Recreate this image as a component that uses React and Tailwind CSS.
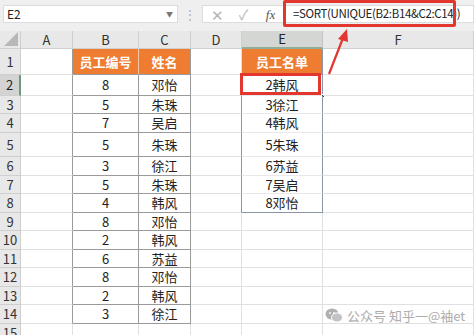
import React from 'react';

const FONT = { fontFamily: '"Noto Sans CJK SC", "Noto Sans", sans-serif' };

const ids = [8, 5, 7, 5, 3, 5, 4, 8, 2, 6, 8, 2, 3];
const names = ['邓怡', '朱珠', '吴启', '朱珠', '徐江', '朱珠', '韩风', '邓怡', '韩风', '苏益', '邓怡', '韩风', '徐江'];
const roster = ['2韩风', '3徐江', '4韩风', '5朱珠', '6苏益', '7吴启', '8邓怡'];
const cols = ['A', 'B', 'C', 'D', 'E', 'F'];

function Toolbar() {
  return (
    <div className="h-[31px] bg-[#efefef] flex items-start pt-[5px] pl-[3px]">
      <div className="w-[175px] h-[18px] bg-white border border-[#dcdcdc] flex items-center justify-between pl-[3px] pr-[4px]">
        <span className="text-[12px] text-[#222] leading-none">E2</span>
        <span className="text-[7px] text-[#777] leading-none">▼</span>
      </div>
      <div className="w-[24px] h-[18px] flex items-center justify-center text-[#b0b0b0] text-[12px]">⋮</div>
      <div className="flex-1 h-[18px] bg-white border border-[#dcdcdc] flex items-center">
        <span className="w-[26px] text-center text-[15px] text-[#b5b5b5] leading-none ml-[1px]">✕</span>
        <span className="w-[27px] text-center text-[14px] text-[#b5b5b5] leading-none">✓</span>
        <span className="w-[27px] text-center text-[13px] text-[#555] italic leading-none" style={{ fontFamily: '"Liberation Serif", serif' }}>fx</span>
        <span className="ml-[9px] text-[11.5px] text-[#222] leading-none tracking-[-0.35px]">=SORT(UNIQUE(B2:B14&amp;C2:C14))</span>
      </div>
    </div>
  );
}

function Cell({ r, c }) {
  // r: 0 header row, 1..15 sheet rows; c: 0 row header, 1..6 = A..F
  if (r === 0 && c === 0) {
    return (
      <div className="bg-[#e8e8e8] border-r border-b border-[#cfcfcf] flex items-end justify-end p-[1px]">
        <svg width="16" height="15" viewBox="0 0 16 15"><polygon points="15,0 15,14 1,14" fill="#b8b8b8" /></svg>
      </div>
    );
  }
  if (r === 0) {
    const sel = c === 5;
    return (
      <div className={sel
        ? 'bg-[#d3d6d3] border-r border-b-2 border-r-[#c4c4c4] border-b-[#8fae97] flex items-center justify-center text-[13px] text-[#222]'
        : 'bg-[#e8e8e8] border-r border-b border-[#cfcfcf] flex items-center justify-center text-[13px] text-[#333]'}>
        {cols[c - 1]}
      </div>
    );
  }
  if (c === 0) {
    const sel = r === 2;
    return (
      <div className={sel
        ? 'bg-[#d3d3d3] border-r-2 border-b border-r-[#6f9a7c] border-b-[#cfcfcf] flex items-center justify-center text-[13px] text-[#222]'
        : 'bg-[#e8e8e8] border-r border-b border-[#cfcfcf] flex items-center justify-center text-[13px] text-[#333]'}>
        {r}
      </div>
    );
  }

  const inTable = r >= 1 && r <= 14;
  const col = cols[c - 1];

  // orange headers
  if (r === 1 && (col === 'B' || col === 'C' || col === 'E')) {
    const label = col === 'B' ? '员工编号' : col === 'C' ? '姓名' : '员工名单';
    return (
      <div className={col === 'B'
        ? 'bg-[#ee7d31] border-r border-b border-r-[#f7c7a4] border-b-[#9a9a9a] flex items-center justify-center text-white font-bold text-[13px]'
        : col === 'C'
          ? 'bg-[#ee7d31] border-r border-b border-r-[#9a9a9a] border-b-[#9a9a9a] flex items-center justify-center text-white font-bold text-[13px]'
          : 'bg-[#ee7d31] border-r border-b border-r-[#8a96a8] border-b-[#8a96a8] flex items-center justify-center text-white font-bold text-[13px]'}>
        {label}
      </div>
    );
  }

  let cls = 'border-r border-b border-r-[#e0e0e0] border-b-[#e0e0e0] flex items-center justify-center text-[13px] text-[#222] relative';
  if (inTable && (col === 'A' || col === 'B' || col === 'C')) {
    cls = (col === 'A')
      ? 'border-r border-b border-r-[#9a9a9a] border-b-[#e0e0e0] flex items-center justify-center text-[13px] text-[#222] relative'
      : 'border-r border-b border-r-[#9a9a9a] border-b-[#9a9a9a] flex items-center justify-center text-[13px] text-[#222] relative';
  }
  if (r >= 2 && r <= 8 && col === 'D') {
    cls = 'border-r border-b border-r-[#8a96a8] border-b-[#e0e0e0] flex items-center justify-center text-[13px] text-[#222] relative';
  }
  if (r >= 2 && r <= 8 && col === 'E') {
    cls = r === 8
      ? 'border-r border-b border-r-[#8a96a8] border-b-[#8a96a8] flex items-center justify-center text-[13px] text-[#222] relative'
      : 'border-r border-b border-r-[#8a96a8] border-b-[#e8e8e8] flex items-center justify-center text-[13px] text-[#222] relative';
  }

  let content = null;
  if (inTable && r >= 2 && col === 'B') content = ids[r - 2];
  if (inTable && r >= 2 && col === 'C') content = names[r - 2];
  if (r >= 2 && r <= 8 && col === 'E') content = roster[r - 2];

  return (
    <div className={cls}>
      {content}
      {r === 2 && col === 'E' && (
        <>
          <div className="absolute left-[-2px] top-[-2px] w-[81px] h-[22px] border-[3px] border-[#e2362e]" />
          <div className="absolute right-[-3px] bottom-[-3px] w-[4px] h-[4px] bg-[#3a3a3a] border border-white" />
        </>
      )}
    </div>
  );
}

function Sheet() {
  const rows = Array.from({ length: 16 }, (_, i) => i);
  return (
    <div className="grid grid-cols-[21px_52px_66px_52px_51px_81px_1fr] grid-rows-[18px_26px_21px_18px_19px_24px_19px_18px_19px_18px_19px_18px_19px_18px_19px_19px]">
      {rows.map((r) => [0, 1, 2, 3, 4, 5, 6].map((c) => <Cell key={r + '-' + c} r={r} c={c} />))}
    </div>
  );
}

export default function App() {
  return (
    <div className="relative w-[474px] h-[335px] overflow-hidden bg-white" style={FONT}>
      <Toolbar />
      <Sheet />

      {/* annotation: formula highlight */}
      <div className="absolute left-[283px] top-[0px] w-[173px] h-[27px] border-[3px] border-[#e2362e] rounded-[2px]" />

      {/* annotation: arrow */}
      <svg className="absolute left-0 top-0 pointer-events-none" width="474" height="335">
        <line x1="329" y1="74" x2="343" y2="38" stroke="#e2362e" strokeWidth="2.2" />
        <polygon points="347,29 338,39 348,42" fill="#e2362e" />
      </svg>

      {/* watermark */}
      <div className="absolute left-[325px] top-[308px] flex items-center gap-[4px] text-[#a4a4a4] opacity-90">
        <svg width="18" height="15" viewBox="0 0 18 15">
          <ellipse cx="7" cy="6" rx="6.5" ry="5.5" fill="#a8a8a8" />
          <ellipse cx="12" cy="9.5" rx="5.5" ry="4.6" fill="#bdbdbd" stroke="#fff" strokeWidth="1" />
          <circle cx="5" cy="5" r="0.9" fill="#fff" />
          <circle cx="9" cy="5" r="0.9" fill="#fff" />
        </svg>
        <span className="text-[13px] leading-none">公众号 知乎一@袖et</span>
      </div>
    </div>
  );
}
